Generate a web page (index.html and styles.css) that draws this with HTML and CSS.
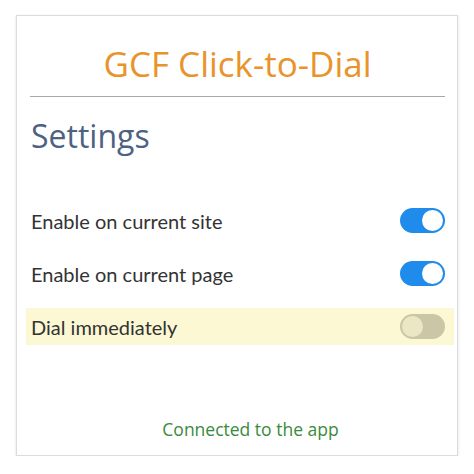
FILE: index.html
```html
<!DOCTYPE html>
<html>
<head>
<meta charset="utf-8">
<link rel="stylesheet" href="styles.css">
</head>
<body>
<div class="card">
  <h1 class="title">GCF Click-to-Dial</h1>
  <h2 class="section">Settings</h2>
  <div class="list">
    <div class="row">
      <span class="label">Enable on current site</span>
      <span class="toggle on"><span class="knob"></span></span>
    </div>
    <div class="row">
      <span class="label">Enable on current page</span>
      <span class="toggle on"><span class="knob"></span></span>
    </div>
    <div class="row highlight">
      <span class="label">Dial immediately</span>
      <span class="toggle off"><span class="knob"></span></span>
    </div>
  </div>
  <div class="footer">Connected to the app</div>
</div>
</body>
</html>
```
FILE: styles.css
```css
html, body {
  margin: 0;
  padding: 0;
  background: #fff;
}
body {
  padding: 15px 16px 0 16px;
}
.card {
  box-sizing: border-box;
  width: 442px;
  height: 441px;
  border: 1px solid #dcdcdc;
  box-shadow: 0 1px 3px rgba(0,0,0,0.12);
  display: flex;
  flex-direction: column;
  padding: 0 12px 0 13px;
}
.title {
  margin: 0;
  padding: 26px 0 10px 0;
  font-family: "Open Sans", sans-serif;
  font-weight: 400;
  font-size: 35px;
  line-height: 44px;
  color: #e8942a;
  text-align: center;
  border-bottom: 1px solid #a8a8a8;
}
.section {
  margin: 19px 0 0 1px;
  font-family: "Open Sans", sans-serif;
  font-weight: 400;
  font-size: 32px;
  line-height: 40px;
  color: #4d6283;
}
.list {
  margin: 46px -9px 0 -4px;
  display: flex;
  flex-direction: column;
  gap: 16px;
}
.row {
  height: 37px;
  display: flex;
  align-items: center;
  justify-content: space-between;
  padding: 0 9px 0 5px;
}
.row.highlight {
  background: #fbf8d3;
}
.label {
  font-family: Lato, sans-serif;
  font-size: 20px;
  color: #333;
}
.toggle {
  position: relative;
  width: 45px;
  height: 25px;
  border-radius: 13px;
  flex: none;
}
.toggle.on {
  background: #1f8ceb;
}
.toggle.off {
  background: #cac7a6;
}
.knob {
  position: absolute;
  top: 2px;
  width: 21px;
  height: 21px;
  border-radius: 50%;
}
.toggle.on .knob {
  right: 2px;
  background: #fff;
}
.toggle.off .knob {
  left: 2px;
  background: #ebe7c5;
}
.footer {
  margin-top: auto;
  padding: 0 0 15px 26px;
  font-family: "Open Sans", sans-serif;
  font-size: 17.5px;
  line-height: 22px;
  color: #3a8a3c;
  text-align: center;
}
```
